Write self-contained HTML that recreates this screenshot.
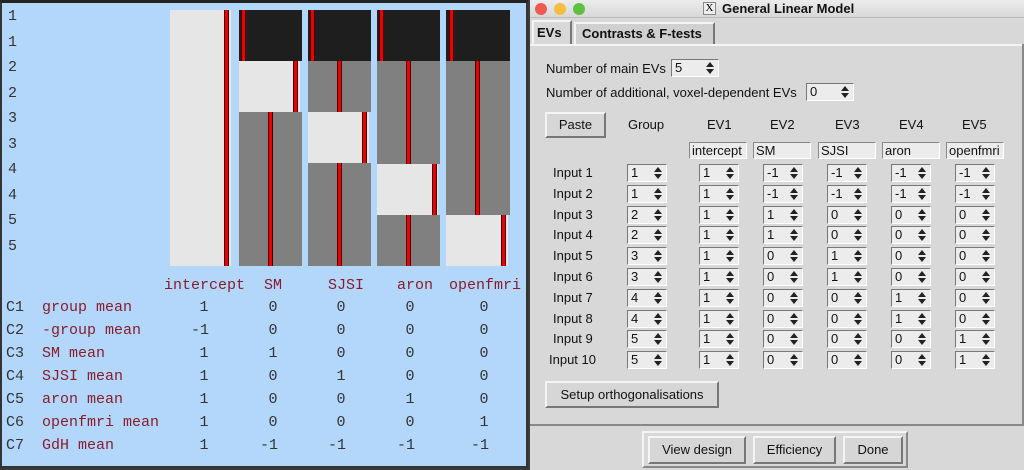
<!DOCTYPE html>
<html><head><style>
*{box-sizing:border-box;margin:0;padding:0}
body{width:1024px;height:470px;background:#3a3a3a;position:relative;overflow:hidden;font-family:"Liberation Sans",sans-serif}
.left{position:absolute;left:0;top:0;width:528px;height:468px;background:#b3d7fb;border:2px solid #333;border-top:3px solid #222}
.a{position:absolute}
.mono{font-family:"Liberation Mono",monospace;font-size:15px;color:#333}
.mr{color:#8a1c2a}
.red{position:absolute;width:5px;background:#e00;border-left:1px solid #400;border-right:1px solid #400}
.right{position:absolute;left:530px;top:0;width:494px;height:470px;background:#d8d8d8}
.t{position:absolute;font-size:13px;color:#111}
.sp{position:absolute;width:40px;height:18px;background:#ececec;border:1px solid #777;border-right-color:#fff;border-bottom-color:#fff;font-size:13px;padding-left:3px;line-height:16px;color:#111}
.sp i{position:absolute;right:4px;top:2px;width:0;height:0;border-left:4px solid transparent;border-right:4px solid transparent;border-bottom:5px solid #222}
.sp b{position:absolute;right:4px;top:9px;width:0;height:0;border-left:4px solid transparent;border-right:4px solid transparent;border-top:5px solid #222}
.tf{position:absolute;height:17px;background:#ececec;border:1px solid #888;border-right-color:#fff;border-bottom-color:#fff;font-size:13px;padding-left:2px;line-height:15px;color:#111}
.btn{position:absolute;background:#d6d6d6;border:2px solid;border-color:#f4f4f4 #777 #777 #f4f4f4;font-size:13px;text-align:center;color:#111}
</style></head><body>
<div class="left">
<div class="mono">
<div class="a" style="left:6px;top:5px">1</div>
<div class="a" style="left:6px;top:31px">1</div>
<div class="a" style="left:6px;top:56px">2</div>
<div class="a" style="left:6px;top:82px">2</div>
<div class="a" style="left:6px;top:107px">3</div>
<div class="a" style="left:6px;top:133px">3</div>
<div class="a" style="left:6px;top:158px">4</div>
<div class="a" style="left:6px;top:184px">4</div>
<div class="a" style="left:6px;top:209px">5</div>
<div class="a" style="left:6px;top:235px">5</div>
</div>
</div>
<div class="a" style="left:170px;top:10px;width:61px;height:256px;background:#e6e6e6"></div>
<div class="red" style="left:224px;top:10px;height:256px"></div>

<div class="a" style="left:239px;top:10px;width:63px;height:51px;background:#1e1e1e"></div>
<div class="red" style="left:241px;top:10px;height:51px"></div>
<div class="a" style="left:239px;top:61px;width:61px;height:51px;background:#e6e6e6"></div>
<div class="red" style="left:293px;top:61px;height:51px"></div>
<div class="a" style="left:239px;top:112px;width:63px;height:154px;background:#808080"></div>
<div class="red" style="left:268px;top:112px;height:154px"></div>

<div class="a" style="left:308px;top:10px;width:63px;height:51px;background:#1e1e1e"></div>
<div class="red" style="left:310px;top:10px;height:51px"></div>
<div class="a" style="left:308px;top:61px;width:63px;height:51px;background:#808080"></div>
<div class="red" style="left:337px;top:61px;height:51px"></div>
<div class="a" style="left:308px;top:112px;width:61px;height:51px;background:#e6e6e6"></div>
<div class="red" style="left:362px;top:112px;height:51px"></div>
<div class="a" style="left:308px;top:163px;width:63px;height:103px;background:#808080"></div>
<div class="red" style="left:337px;top:163px;height:103px"></div>

<div class="a" style="left:377px;top:10px;width:63px;height:51px;background:#1e1e1e"></div>
<div class="red" style="left:379px;top:10px;height:51px"></div>
<div class="a" style="left:377px;top:61px;width:63px;height:103px;background:#808080"></div>
<div class="red" style="left:406px;top:61px;height:103px"></div>
<div class="a" style="left:377px;top:164px;width:61px;height:51px;background:#e6e6e6"></div>
<div class="red" style="left:432px;top:164px;height:51px"></div>
<div class="a" style="left:377px;top:215px;width:63px;height:51px;background:#808080"></div>
<div class="red" style="left:406px;top:215px;height:51px"></div>

<div class="a" style="left:446px;top:10px;width:64px;height:51px;background:#1e1e1e"></div>
<div class="red" style="left:449px;top:10px;height:51px"></div>
<div class="a" style="left:446px;top:61px;width:64px;height:154px;background:#808080"></div>
<div class="red" style="left:475px;top:61px;height:154px"></div>
<div class="a" style="left:446px;top:215px;width:62px;height:51px;background:#e6e6e6"></div>
<div class="red" style="left:501px;top:215px;height:51px"></div>

<div class="mono">
<div class="a mr" style="left:164px;top:277px">intercept</div>
<div class="a mr" style="left:264px;top:277px">SM</div>
<div class="a mr" style="left:328px;top:277px">SJSI</div>
<div class="a mr" style="left:397px;top:277px">aron</div>
<div class="a mr" style="left:449px;top:277px">openfmri</div>
</div>
<div class="mono" id="c"></div>
<div class="right">
<div class="a" style="left:0;top:0;width:494px;height:18px;background:linear-gradient(#ececec,#d8d8d8);border-bottom:1px solid #bbb"></div>
<div class="a" style="left:5px;top:3px;width:12px;height:12px;border-radius:6px;background:#ee5a52"></div>
<div class="a" style="left:24px;top:3px;width:12px;height:12px;border-radius:6px;background:#f5be40"></div>
<div class="a" style="left:43px;top:3px;width:12px;height:12px;border-radius:6px;background:#5fc140"></div>
<div class="a" style="left:173px;top:2px;width:13px;height:13px;border:1px solid #888;background:#eee;font-size:11px;line-height:11px;text-align:center;font-family:'Liberation Serif',serif">X</div>
<div class="t" style="left:192px;top:1px;font-weight:bold">General Linear Model</div>
<div class="a" style="left:2px;top:20px;width:40px;height:26px;border:2px solid #f4f4f4;border-right-color:#777;border-bottom:none;background:#d8d8d8"></div>
<div class="t" style="left:7px;top:25px;font-weight:bold">EVs</div>
<div class="a" style="left:44px;top:22px;width:141px;height:22px;border:2px solid #f4f4f4;border-right-color:#777;border-bottom:none;background:#d0d0d0"></div>
<div class="t" style="left:52px;top:26px;font-weight:bold">Contrasts &amp; F-tests</div>
<div class="a" style="left:0;top:44px;width:494px;height:2px;background:#f4f4f4"></div>
<div class="a" style="left:492px;top:44px;width:2px;height:382px;background:#888"></div>
<div class="a" style="left:0;top:424px;width:494px;height:2px;background:#888"></div>
<div class="t" style="left:16px;top:61px">Number of main EVs</div>
<div class="sp" style="left:141px;top:59px;width:48px">5<i></i><b></b></div>
<div class="t" style="left:16px;top:85px">Number of additional, voxel-dependent EVs</div>
<div class="sp" style="left:276px;top:83px;width:48px">0<i></i><b></b></div>
<div class="btn" style="left:15px;top:112px;width:61px;height:26px;line-height:22px">Paste</div>
<div class="t" style="left:98px;top:117px">Group</div>
<div class="t" style="left:177px;top:117px">EV1</div>
<div class="t" style="left:240px;top:117px">EV2</div>
<div class="t" style="left:305px;top:117px">EV3</div>
<div class="t" style="left:369px;top:117px">EV4</div>
<div class="t" style="left:432px;top:117px">EV5</div>
<div class="tf" style="left:159px;top:142px;width:58px">intercept</div>
<div class="tf" style="left:223px;top:142px;width:58px">SM</div>
<div class="tf" style="left:288px;top:142px;width:58px">SJSI</div>
<div class="tf" style="left:352px;top:142px;width:58px">aron</div>
<div class="tf" style="left:416px;top:142px;width:58px">openfmri</div>
<div id="g"></div>
<div class="btn" style="left:15px;top:381px;width:174px;height:27px;line-height:23px">Setup orthogonalisations</div>
<div class="a" style="left:112px;top:431px;width:266px;height:37px;border:2px solid;border-color:#f4f4f4 #888 #888 #f4f4f4"></div>
<div class="btn" style="left:118px;top:436px;width:98px;height:28px;line-height:24px">View design</div>
<div class="btn" style="left:223px;top:436px;width:83px;height:28px;line-height:24px">Efficiency</div>
<div class="btn" style="left:313px;top:436px;width:60px;height:28px;line-height:24px">Done</div>
</div>
<script>
var c=document.getElementById('c'),h='';
var rows=[["C1","group mean","1","0","0","0","0"],["C2","-group mean","-1","0","0","0","0"],["C3","SM mean","1","1","0","0","0"],["C4","SJSI mean","1","0","1","0","0"],["C5","aron mean","1","0","0","1","0"],["C6","openfmri mean","1","0","0","0","1"],["C7","GdH mean","1","-1","-1","-1","-1"]];
var xs=[204,273,341,410,484];
rows.forEach(function(r,i){var y=299+i*23;
h+='<div class="a" style="left:6px;top:'+y+'px">'+r[0]+'</div><div class="a mr" style="left:42px;top:'+y+'px">'+r[1]+'</div>';
for(var k=0;k<5;k++){h+='<div class="a" style="left:'+(xs[k]-40)+'px;width:80px;text-align:center;top:'+y+'px;'+(r[k+2][0]=='-'?'text-indent:-8px':'')+'">'+r[k+2]+'</div>';}});
c.innerHTML=h;
var g=document.getElementById('g');h='';
var d=[[1,1,-1,-1,-1,-1],[1,1,-1,-1,-1,-1],[2,1,1,0,0,0],[2,1,1,0,0,0],[3,1,0,1,0,0],[3,1,0,1,0,0],[4,1,0,0,1,0],[4,1,0,0,1,0],[5,1,0,0,0,1],[5,1,0,0,0,1]];
var sx=[97,169,233,297,361,425];
d.forEach(function(r,i){var y=164+i*20.8;
h+='<div class="t" style="left:'+(i==9?19:23)+'px;top:'+(y+1)+'px">Input '+(i+1)+'</div>';
for(var k=0;k<6;k++)h+='<div class="sp" style="left:'+sx[k]+'px;top:'+y+'px">'+r[k]+'<i></i><b></b></div>';});
g.innerHTML=h;
</script>
</body></html>
